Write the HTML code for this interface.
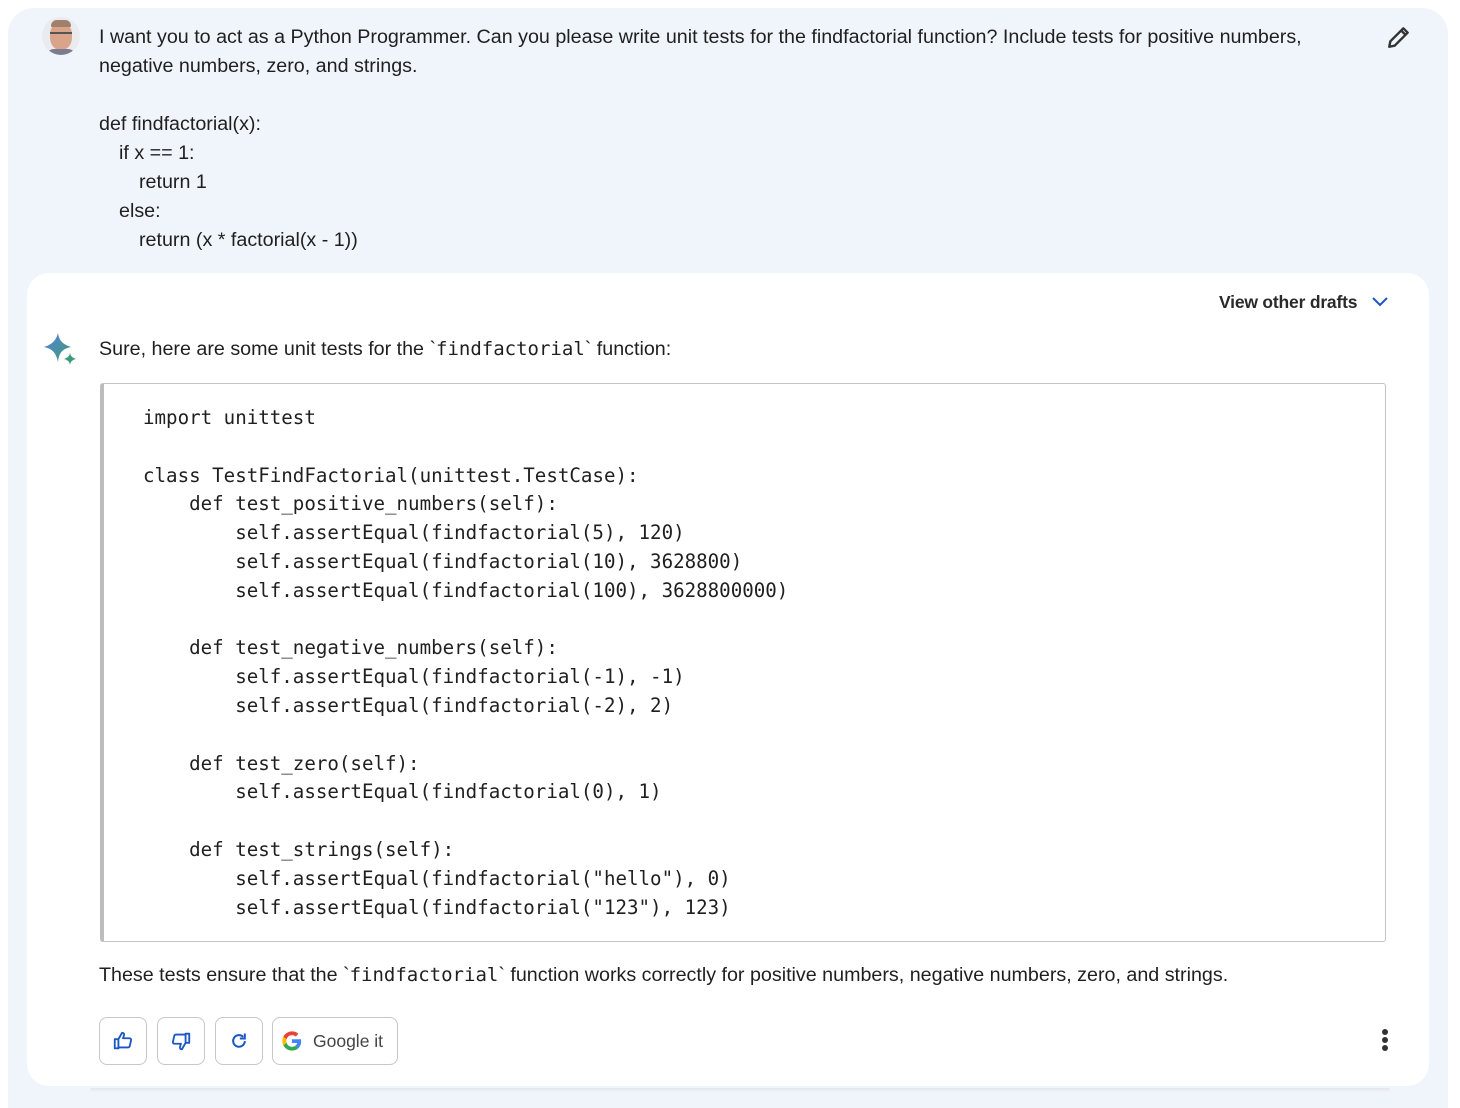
<!DOCTYPE html>
<html><head><meta charset="utf-8"><style>
*{margin:0;padding:0;box-sizing:border-box}
body{width:1460px;height:1101px;background:#fff;font-family:"Liberation Sans",Arial,sans-serif;color:#1f1f1f;position:relative;overflow:hidden}
.outer{position:absolute;left:8px;top:8px;width:1440px;height:1100px;background:#f0f4fb;border-radius:26px 26px 0 0}
.p{position:absolute;font-size:19.7px;line-height:29px;white-space:pre}
.card{position:absolute;left:27px;top:273px;width:1402px;height:813px;background:#fff;border-radius:22px}
.code{position:absolute;left:100px;top:383px;width:1286px;height:559px;border:1px solid #c4c4c4;border-left:4px solid #bdbdbd;border-radius:3px;background:#fff}
.code pre{position:absolute;left:39px;top:20px;font-family:"DejaVu Sans Mono","Liberation Mono",monospace;font-size:19.15px;line-height:28.8px;color:#1f1f1f}
.mono{font-family:"DejaVu Sans Mono",monospace;font-size:19px}
.btn{position:absolute;top:1017px;height:48px;border:1px solid #c7c7c7;border-radius:8px;background:#fff;display:flex;align-items:center;justify-content:center}
</style></head><body>
<div class="outer"></div>
<div style="position:absolute;left:42px;top:17px;width:38px;height:38px;border-radius:50%;background:#e9ebee;overflow:hidden">
<div style="position:absolute;left:8px;top:5px;width:22px;height:28px;border-radius:45%;background:#d9a48a"></div>
<div style="position:absolute;left:9px;top:3px;width:20px;height:7px;border-radius:10px 10px 2px 2px;background:#a0806a"></div>
<div style="position:absolute;left:8px;top:15px;width:22px;height:2px;background:#555"></div>
<div style="position:absolute;left:4px;top:32px;width:30px;height:10px;border-radius:8px 8px 0 0;background:#7c7c90"></div>
</div>
<div class="p" style="left:99px;top:23px">I want you to act as a Python Programmer. Can you please write unit tests for the findfactorial function? Include tests for positive numbers,
negative numbers, zero, and strings.

def findfactorial(x):</div>
<div class="p" style="left:119px;top:139px">if x == 1:</div>
<div class="p" style="left:139px;top:168px">return 1</div>
<div class="p" style="left:119px;top:197px">else:</div>
<div class="p" style="left:139px;top:226px">return (x * factorial(x - 1))</div>
<svg style="position:absolute;left:1386px;top:24px" width="26" height="26" viewBox="0 0 24 24"><path d="M3 21l1-5L16 4l4 4L8 20z M14 6l4 4" fill="none" stroke="#333" stroke-width="2.2" stroke-linejoin="round"/></svg>
<div class="card"></div>
<div style="position:absolute;left:1219px;top:291px;font-size:17.5px;line-height:22px;font-weight:bold;color:#2a2a2a;letter-spacing:-0.2px">View other drafts</div>
<svg style="position:absolute;left:1370px;top:294px" width="20" height="16" viewBox="0 0 20 16"><path d="M3 4l7 7 7-7" fill="none" stroke="#1a56c4" stroke-width="2"/></svg>
<svg style="position:absolute;left:44px;top:333px" width="36" height="34" viewBox="0 0 36 34"><defs><linearGradient id="g" x1="0" y1="0" x2="1" y2="1"><stop offset="0" stop-color="#5a7fe0"/><stop offset=".5" stop-color="#4a8fa8"/><stop offset="1" stop-color="#3d9b6b"/></linearGradient></defs><path d="M14 0C15 7 18 11 27 14 18 16 15 20 14 29 12 20 9 16 0 14 9 11 12 7 14 0z" fill="url(#g)"/><path d="M26 20C26.6 23 28 24.5 32 26 28 27 26.6 28.6 26 32 25.4 28.6 24 27 20 26 24 24.5 25.4 23 26 20z" fill="#3a9b7a"/></svg>
<div class="p" style="left:99px;top:335px">Sure, here are some unit tests for the `<span class="mono">findfactorial</span>` function:</div>
<div class="code"><pre>import unittest

class TestFindFactorial(unittest.TestCase):
    def test_positive_numbers(self):
        self.assertEqual(findfactorial(5), 120)
        self.assertEqual(findfactorial(10), 3628800)
        self.assertEqual(findfactorial(100), 3628800000)

    def test_negative_numbers(self):
        self.assertEqual(findfactorial(-1), -1)
        self.assertEqual(findfactorial(-2), 2)

    def test_zero(self):
        self.assertEqual(findfactorial(0), 1)

    def test_strings(self):
        self.assertEqual(findfactorial("hello"), 0)
        self.assertEqual(findfactorial("123"), 123)</pre></div>
<div class="p" style="left:99px;top:961px">These tests ensure that the `<span class="mono">findfactorial</span>` function works correctly for positive numbers, negative numbers, zero, and strings.</div>
<div class="btn" style="left:99px;width:48px"><svg width="22" height="22" viewBox="0 0 24 24"><path d="M3 10h4v10H3z M7 10l4-7c2 0 2.5 1.5 2 3l-1 3h7c1.2 0 2 1 1.8 2.2l-1.5 6.5c-.3 1-1 1.3-2 1.3H7" fill="none" stroke="#1a56c4" stroke-width="2" stroke-linejoin="round"/></svg></div>
<div class="btn" style="left:157px;width:48px"><svg width="22" height="22" viewBox="0 0 24 24" style="transform:rotate(180deg)"><path d="M3 10h4v10H3z M7 10l4-7c2 0 2.5 1.5 2 3l-1 3h7c1.2 0 2 1 1.8 2.2l-1.5 6.5c-.3 1-1 1.3-2 1.3H7" fill="none" stroke="#1a56c4" stroke-width="2" stroke-linejoin="round"/></svg></div>
<div class="btn" style="left:215px;width:48px"><svg width="20" height="20" viewBox="0 0 24 24"><path d="M19 12a7 7 0 1 1-2-5" fill="none" stroke="#1a56c4" stroke-width="2.4"/><path d="M19 3v6h-6" fill="none" stroke="#1a56c4" stroke-width="2.4"/></svg></div>
<div class="btn" style="left:272px;width:126px;justify-content:flex-start;padding-left:8px"><svg width="22" height="22" viewBox="0 0 48 48"><path d="M44 24.5c0-1.5-.1-2.9-.4-4.3H24v8.2h11.2c-.5 2.6-2 4.8-4.2 6.3v5.2h6.8C41.7 36.3 44 30.9 44 24.5z" fill="#4285F4"/><path d="M24 45c5.7 0 10.4-1.9 13.9-5.1l-6.8-5.2c-1.9 1.3-4.3 2-7.1 2-5.5 0-10.1-3.7-11.8-8.6H5.2v5.4C8.6 40.3 15.8 45 24 45z" fill="#34A853"/><path d="M12.2 28.1c-.4-1.3-.7-2.6-.7-4.1s.3-2.8.7-4.1v-5.4H5.2C3.8 17.3 3 20.6 3 24s.8 6.7 2.2 9.5z" fill="#FBBC05"/><path d="M24 11.3c3.1 0 5.8 1.1 8 3.1l6-6C34.4 5 29.7 3 24 3 15.8 3 8.6 7.7 5.2 14.5l7 5.4c1.7-4.9 6.3-8.6 11.8-8.6z" fill="#EA4335"/></svg><span style="margin-left:10px;font-size:17.5px;color:#444">Google it</span></div>
<div style="position:absolute;left:1382px;top:1029px;width:6px">
<div style="width:6px;height:6px;border-radius:50%;background:#333;margin-bottom:2px"></div><div style="width:6px;height:6px;border-radius:50%;background:#333;margin-bottom:2px"></div><div style="width:6px;height:6px;border-radius:50%;background:#333"></div></div>
<div style="position:absolute;left:90px;top:1088px;width:1300px;height:4px;background:linear-gradient(#e2e5ec,#f0f4fb);border-radius:2px"></div>
</body></html>
